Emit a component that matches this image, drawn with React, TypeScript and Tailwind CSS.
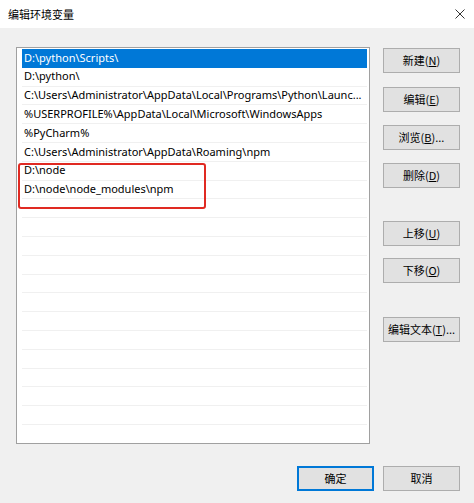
import React from "react";

const paths = [
  "D:\\python\\Scripts\\",
  "D:\\python\\",
  "C:\\Users\\Administrator\\AppData\\Local\\Programs\\Python\\Launc...",
  "%USERPROFILE%\\AppData\\Local\\Microsoft\\WindowsApps",
  "%PyCharm%",
  "C:\\Users\\Administrator\\AppData\\Roaming\\npm",
  "D:\\node",
  "D:\\node\\node_modules\\npm",
];

const cjk = "font-['Noto_Sans_CJK_SC','Noto_Sans',sans-serif]";

type BtnProps = {
  label: string;
  hotkey?: string;
  tail?: string;
  primary?: boolean;
  className?: string;
};

const Btn = ({ label, hotkey, tail = "", primary, className = "" }: BtnProps) => {
  return (
    <button
      className={`w-[77px] h-[25px] flex items-center justify-center bg-[#e1e1e1] text-[11px] text-black ${cjk} ${
        primary ? "border-2 border-[#0078d7]" : "border border-[#adadad]"
      } ${className}`}
    >
      {label}
      {hotkey && (
        <span>
          (<span className="underline">{hotkey}</span>){tail}
        </span>
      )}
    </button>
  );
};

const App = () => {
  const rows = Array.from({ length: 22 }, (_, i) => paths[i] ?? "");

  return (
    <div className="w-[474px] h-[503px] flex flex-col bg-[#f0f0f0] overflow-hidden">
      <div className="h-[28px] bg-white flex items-center justify-between pl-[8px] pr-[9px]">
        <span className={`text-[11px] text-black ${cjk}`}>编辑环境变量</span>
        <svg width="10" height="10" viewBox="0 0 10 10">
          <path d="M0.5 0.5 L9.5 9.5 M9.5 0.5 L0.5 9.5" stroke="#333" strokeWidth="1" />
        </svg>
      </div>

      <div className="flex-1 flex flex-col pt-[19px] pl-[16px] pr-[14px]">
        <div className="flex">
          <div className="relative w-[354px] h-[397px] bg-white border border-[#a0a0a0] pt-[1px] pl-[5px] pr-[2px] overflow-hidden">
            {rows.map((p, i) => (
              <div
                key={i}
                className={`h-[18.8px] flex items-center pl-[2px] whitespace-nowrap overflow-hidden text-[11px] font-['Noto_Sans',sans-serif] border-b ${
                  i === 0
                    ? "bg-[#0078d7] text-white border-[#0078d7]"
                    : "text-black border-[#f0f0f0]"
                }`}
              >
                {p}
              </div>
            ))}
            <div className="absolute left-[1px] top-[115px] w-[188px] h-[46px] border-2 border-[#e02a22] rounded-[3px]" />
          </div>

          <div className="ml-[13px] flex flex-col pt-[1px]">
            <Btn label="新建" hotkey="N" />
            <Btn label="编辑" hotkey="E" className="mt-[14px]" />
            <Btn label="浏览" hotkey="B" tail="..." className="mt-[13px]" />
            <Btn label="删除" hotkey="D" className="mt-[13px]" />
            <Btn label="上移" hotkey="U" className="mt-[33px]" />
            <Btn label="下移" hotkey="O" className="mt-[12px]" />
            <Btn label="编辑文本" hotkey="T" tail="..." className="mt-[34px]" />
          </div>
        </div>

        <div className="flex justify-end gap-[9px] mt-[22px]">
          <Btn label="确定" primary />
          <Btn label="取消" />
        </div>
      </div>
    </div>
  );
};

export default App;
